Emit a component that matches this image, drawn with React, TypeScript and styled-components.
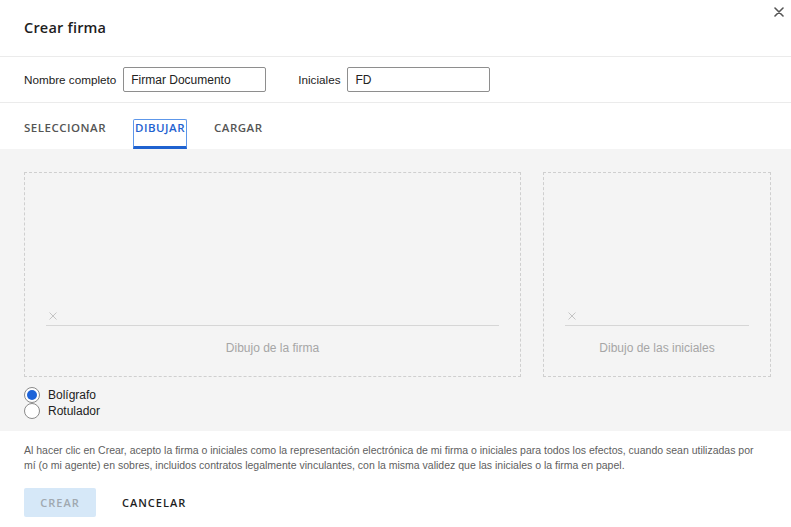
import React from "react";
import styled, { createGlobalStyle } from "styled-components";

const Global = createGlobalStyle`
  html, body { margin: 0; padding: 0; background: #fff; }
  body { font-family: "Liberation Sans", Arial, sans-serif; color: #222; }
  * { box-sizing: border-box; }
`;

const Dialog = styled.div`
  width: 791px;
  height: 527px;
  display: flex;
  flex-direction: column;
  background: #fff;
  overflow: hidden;
`;

const Header = styled.header`
  height: 57px;
  display: flex;
  justify-content: space-between;
  align-items: flex-start;
  padding: 0 5px 0 24px;
  border-bottom: 1px solid #ebebeb;
`;

const Title = styled.h1`
  margin: 0;
  padding-top: 18px;
  font-family: "Open Sans", sans-serif;
  font-size: 14.5px;
  font-weight: 600;
  letter-spacing: 0.2px;
  color: #1e1e1e;
  line-height: 20px;
`;

const Close = styled.button`
  border: 0;
  background: none;
  padding: 0;
  margin-top: 5px;
  width: 14px;
  height: 14px;
  display: flex;
  align-items: center;
  justify-content: center;
  cursor: pointer;
`;

const NameRow = styled.div`
  height: 46px;
  display: flex;
  align-items: center;
  padding: 0 24px;
  border-bottom: 1px solid #ebebeb;
`;

const Field = styled.label`
  display: flex;
  align-items: center;
  gap: 7px;
  font-size: 11.7px;
  color: #222;
  & + & { margin-left: 32px; }
`;

const TextInput = styled.input`
  width: 143px;
  height: 25px;
  border: 1px solid #8e8e8e;
  border-radius: 2px;
  padding: 0 7px;
  font-family: "Liberation Sans", Arial, sans-serif;
  font-size: 12px;
  color: #222;
  background: #fff;
  outline: none;
`;

const Tabs = styled.nav`
  height: 46px;
  display: flex;
  align-items: flex-end;
  gap: 25px;
  padding: 0 22px;
`;

const Tab = styled.button<{ $active?: boolean }>`
  height: 30px;
  padding: 1px 1px 0;
  display: flex;
  align-items: flex-start;
  background: none;
  font-family: "Open Sans", sans-serif;
  font-size: 11.5px;
  font-weight: 600;
  letter-spacing: 0.5px;
  line-height: 14px;
  color: ${(p) => (p.$active ? "#1f62d0" : "#555")};
  border: 1px solid ${(p) => (p.$active ? "#5d97ea" : "transparent")};
  border-bottom: 3px solid ${(p) => (p.$active ? "#1f62d0" : "transparent")};
  border-radius: 2px 2px 0 0;
  cursor: pointer;
`;

const DrawArea = styled.section`
  height: 282px;
  background: #f4f4f4;
  padding: 23px 20px 0 24px;
  display: flex;
  flex-direction: column;
`;

const Pads = styled.div`
  display: grid;
  grid-template-columns: 497px 228px;
  gap: 22px;
`;

const Pad = styled.div`
  height: 205px;
  border: 1px dashed #cfcfcf;
  display: flex;
  flex-direction: column;
  justify-content: flex-end;
  padding: 0 21px 20px;
`;

const Baseline = styled.div`
  display: flex;
  align-items: flex-end;
  height: 18px;
  padding: 0 0 5px 3px;
  border-bottom: 1px solid #d6d6d6;
`;

const PadLabel = styled.div`
  margin-top: 14px;
  text-align: center;
  font-size: 12px;
  line-height: 16px;
  color: #a6a6a6;
`;

const Radios = styled.div`
  margin-top: 10px;
  display: flex;
  flex-direction: column;
`;

const RadioRow = styled.label`
  display: flex;
  align-items: center;
  gap: 8px;
  height: 16px;
  font-size: 12px;
  color: #222;
`;

const RadioDot = styled.span<{ $checked?: boolean }>`
  width: 16px;
  height: 16px;
  border-radius: 50%;
  border: 1px solid #8a8a8a;
  background: #fff;
  display: flex;
  align-items: center;
  justify-content: center;
  &::after {
    content: "";
    width: 10px;
    height: 10px;
    border-radius: 50%;
    background: ${(p) => (p.$checked ? "#1d63d8" : "transparent")};
  }
`;

const Footer = styled.footer`
  padding: 12px 20px 0 24px;
`;

const Legal = styled.p`
  margin: 0;
  max-width: 742px;
  font-size: 10.5px;
  line-height: 15px;
  color: #606060;
`;

const Actions = styled.div`
  margin-top: 15px;
  display: flex;
  align-items: center;
  gap: 26px;
`;

const Button = styled.button<{ $primary?: boolean }>`
  height: 29px;
  width: ${(p) => (p.$primary ? "72px" : "auto")};
  padding: 0;
  border: 0;
  border-radius: 2px;
  background: ${(p) => (p.$primary ? "#d6e8f8" : "transparent")};
  color: ${(p) => (p.$primary ? "#a0a8b0" : "#1e1e1e")};
  font-family: "Open Sans", sans-serif;
  font-size: 11px;
  font-weight: 600;
  letter-spacing: 1px;
  cursor: pointer;
`;

const XMark = ({ size, color, stroke }: { size: number; color: string; stroke: number }) => (
  <svg width={size} height={size} viewBox="0 0 10 10">
    <path d="M1 1L9 9M9 1L1 9" stroke={color} strokeWidth={stroke} strokeLinecap="round" />
  </svg>
);

export default function App() {
  return (
    <>
      <Global />
      <Dialog>
        <Header>
          <Title>Crear firma</Title>
          <Close aria-label="Cerrar">
            <XMark size={10} color="#555" stroke={1.6} />
          </Close>
        </Header>
        <NameRow>
          <Field>
            Nombre completo
            <TextInput defaultValue="Firmar Documento" />
          </Field>
          <Field>
            Iniciales
            <TextInput defaultValue="FD" />
          </Field>
        </NameRow>
        <Tabs>
          <Tab>SELECCIONAR</Tab>
          <Tab $active>DIBUJAR</Tab>
          <Tab>CARGAR</Tab>
        </Tabs>
        <DrawArea>
          <Pads>
            <Pad>
              <Baseline>
                <XMark size={8} color="#bdbdbd" stroke={1.1} />
              </Baseline>
              <PadLabel>Dibujo de la firma</PadLabel>
            </Pad>
            <Pad>
              <Baseline>
                <XMark size={8} color="#bdbdbd" stroke={1.1} />
              </Baseline>
              <PadLabel>Dibujo de las iniciales</PadLabel>
            </Pad>
          </Pads>
          <Radios>
            <RadioRow>
              <RadioDot $checked />
              Bolígrafo
            </RadioRow>
            <RadioRow>
              <RadioDot />
              Rotulador
            </RadioRow>
          </Radios>
        </DrawArea>
        <Footer>
          <Legal>
            Al hacer clic en Crear, acepto la firma o iniciales como la representación electrónica de mi firma o
            iniciales para todos los efectos, cuando sean utilizadas por mí (o mi agente) en sobres, incluidos
            contratos legalmente vinculantes, con la misma validez que las iniciales o la firma en papel.
          </Legal>
          <Actions>
            <Button $primary>CREAR</Button>
            <Button>CANCELAR</Button>
          </Actions>
        </Footer>
      </Dialog>
    </>
  );
}
